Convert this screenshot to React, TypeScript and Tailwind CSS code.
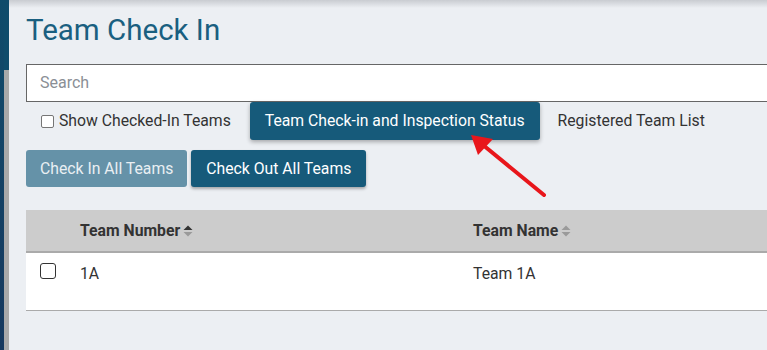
import React from "react";

function SortIcon({ active }: { active?: boolean }) {
  return (
    <svg width="10" height="12" viewBox="0 0 10 12" className="ml-[3px]">
      <path d="M0.5 5 L5 0.5 L9.5 5 Z" fill={active ? "#333333" : "#9a9a9a"} />
      <path d="M0.5 7 L5 11.5 L9.5 7 Z" fill="#9a9a9a" />
    </svg>
  );
}

export default function App() {
  return (
    <div className="flex h-[350px] w-[767px] overflow-hidden" style={{ fontFamily: "Roboto, 'Noto Sans', sans-serif" }}>
      <div className="flex w-[9px] shrink-0">
        <div className="w-[4px] h-full bg-gradient-to-b from-[#0f4c6b] to-[#16385e]" />
        <div className="w-[5px] h-full flex flex-col">
          <div className="h-[70px] bg-[#0f4c6b]" />
          <div className="flex-1 bg-[#a9a9a9]" />
        </div>
      </div>
      <div className="relative flex-1 bg-[#eceff3] overflow-hidden">
        <div className="pointer-events-none absolute inset-x-0 top-0 h-[8px] bg-gradient-to-b from-[#c9ccd1] to-transparent" />
        <div className="w-[900px] pl-[17px] pt-[13px]">
          <h1 className="text-[29.5px] leading-[34px] text-[#1a5f80] font-normal">Team Check In</h1>
          <div className="mt-[17px] h-[38px] bg-white border border-[#666666] flex items-center pl-[13px] text-[16px] text-[#8a8f96]">
            Search
          </div>
          <div className="flex items-center h-[38px]">
            <label className="flex items-center ml-[15px] text-[15.75px] text-[#333]">
              <span className="w-[13px] h-[13px] border border-[#767676] rounded-[2px] bg-white mr-[5px]" />
              Show Checked-In Teams
            </label>
            <div className="ml-[19px] h-[38px] px-[15px] flex items-center bg-[#165a7a] text-white text-[15.75px] rounded-[3px] shadow-[0_2px_4px_rgba(0,0,0,0.3)]">
              Team Check-in and Inspection Status
            </div>
            <div className="ml-[18px] text-[15.75px] text-[#333]">Registered Team List</div>
          </div>
          <div className="flex mt-[10px] gap-[4px]">
            <div className="h-[37px] px-[14px] flex items-center bg-[#6592a8] text-[#e9eff3] text-[15.75px] rounded-[3px]">
              Check In All Teams
            </div>
            <div className="h-[37px] px-[15px] flex items-center bg-[#165a7a] text-white text-[15.75px] rounded-[3px] shadow-[0_2px_3px_rgba(0,0,0,0.3)]">
              Check Out All Teams
            </div>
          </div>
          <div className="mt-[23px]">
            <div className="flex items-center h-[43px] bg-[#cccccc] border-b-[2px] border-[#aaaaaa] text-[15.75px] font-bold text-[#333]">
              <div className="w-[54px]" />
              <div className="w-[393px] flex items-center">Team Number<SortIcon active /></div>
              <div className="flex items-center">Team Name<SortIcon /></div>
            </div>
            <div className="flex items-start h-[58px] pt-[9px] bg-white border-b border-[#aaaaaa] text-[15.75px] text-[#333]">
              <div className="w-[54px] flex pl-[14px] pt-[1px]">
                <span className="w-[16px] h-[16px] border-[1.5px] border-[#333] rounded-[3px]" />
              </div>
              <div className="w-[393px]">1A</div>
              <div>Team 1A</div>
            </div>
          </div>
        </div>
        <svg className="absolute left-0 top-0 pointer-events-none" width="758" height="350">
          <line x1="535" y1="195" x2="474" y2="145" stroke="#e8161b" strokeWidth="4" strokeLinecap="round" />
          <path d="M462 135 L484 139 L469 155 Z" fill="#e8161b" />
        </svg>
      </div>
    </div>
  );
}
